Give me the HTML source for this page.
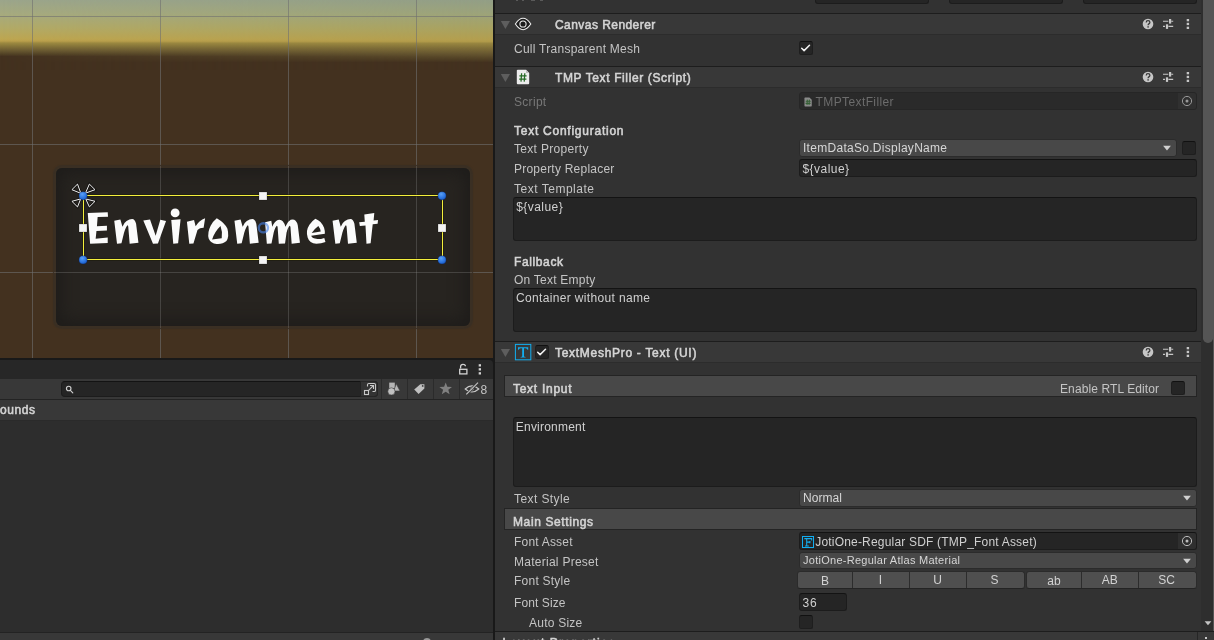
<!DOCTYPE html>
<html><head><meta charset="utf-8"><title>Unity Inspector</title>
<style>
*{box-sizing:border-box;margin:0;padding:0}
html,body{width:1214px;height:640px;overflow:hidden;background:#323232;font-family:"Liberation Sans",sans-serif;font-size:12px}
#root{position:relative;width:1214px;height:640px;overflow:hidden;background:#323232}
.a{position:absolute}
.t{position:absolute;white-space:nowrap;line-height:14px;font-size:12px;color:#c4c4c4}
.t.b{font-weight:normal;-webkit-text-stroke:0.55px #d4d4d4;color:#d4d4d4}
.t.c{text-align:center}
.hl{position:absolute;left:495px;width:706px;height:1px;background:#1d1d1d}
.hd{position:absolute;left:495px;width:706px;height:21px;background:#383838;border-bottom:1px solid #2c2c2c}
.tf{position:absolute;background:#252525;border:1px solid #1c1c1c;border-top-color:#131313;border-radius:3px}
.dd{position:absolute;background:#484848;border:1px solid #2b2b2b;border-radius:3px}
.cb{position:absolute;width:14px;height:14px;background:#252525;border:1px solid #1e1e1e;border-top-color:#111;border-radius:2.5px}
.bar{position:absolute;left:504px;width:693px;height:22px;background:#484848;border:1px solid #242424}
svg{position:absolute;overflow:visible}
</style></head><body><div id="root">

<!-- ================= SCENE VIEW ================= -->
<div class="a" id="scene" style="left:0;top:0;width:493px;height:358px;overflow:hidden;background:#43311f">
  <div class="a" style="left:0;top:0;width:493px;height:70px;background:linear-gradient(to bottom,#9ba58b 0px,#a6aa7f 14px,#b2aa67 28px,#bda651 39px,#bba04c 41px,#9c8940 43px,#806f38 47px,#665630 51px,#534326 54px,#43311f 56.5px,#43311f 100%)"></div>
  <div class="a" style="left:0;top:0;width:493px;height:70px;-webkit-mask-image:linear-gradient(to right,transparent 0%,#000 100%);mask-image:linear-gradient(to right,transparent 0%,#000 100%);background:linear-gradient(to bottom,#929e86 0px,#9ca379 14px,#a8a261 28px,#b39e4e 40px,#b09a4a 41.5px,#978540 43.5px,#806f38 48px,#665630 54px,#514125 59px,#43311f 62.5px,#43311f 100%)"></div>
  <!-- grid -->
  <div class="a" style="left:32px;top:0;width:1px;height:358px;background:rgba(112,112,112,.6)"></div>
  <div class="a" style="left:160px;top:0;width:1px;height:358px;background:rgba(112,112,112,.6)"></div>
  <div class="a" style="left:288px;top:0;width:1px;height:358px;background:rgba(112,112,112,.6)"></div>
  <div class="a" style="left:416px;top:0;width:1px;height:358px;background:rgba(112,112,112,.6)"></div>
  <div class="a" style="left:0;top:16px;width:493px;height:1px;background:rgba(112,112,112,.6)"></div>
  <div class="a" style="left:0;top:144px;width:493px;height:1px;background:rgba(112,112,112,.6)"></div>
  <div class="a" style="left:0;top:272px;width:493px;height:1px;background:rgba(112,112,112,.6)"></div>
  <!-- panel -->
  <div class="a" style="left:56px;top:168px;width:414px;height:158px;border-radius:6px;background:#272420;box-shadow:inset 0 0 16px 5px #1e1c1a,0 0 1px 2.5px #3a2f23"></div>
  <!-- grid over panel (faint) -->
  <div class="a" style="left:160px;top:166px;width:1px;height:162px;background:rgba(150,150,150,.28)"></div>
  <div class="a" style="left:288px;top:166px;width:1px;height:162px;background:rgba(150,150,150,.28)"></div>
  <div class="a" style="left:416px;top:166px;width:1px;height:162px;background:rgba(150,150,150,.28)"></div>
  <div class="a" style="left:54px;top:272px;width:418px;height:1px;background:rgba(150,150,150,.28)"></div>
  <!-- scene text -->
  <svg style="left:0;top:0" width="493" height="358" viewBox="0 0 493 358">
 <defs>
  <path id="gn" d="M306,170 L368,156 L389,229 Q405,190 431,173 Q460,152 487,151 Q515,152 527,200 L551,392 L462,401 L448,232 Q446,212 440,214 Q425,225 405,290 L379,396 L334,403 Z"/>
 </defs>
 <g fill="#fbfbfb" fill-rule="evenodd">
  <g transform="translate(84,204) scale(0.098843)">
   <path d="M38,92 L240,84 L243,128 L138,132 L131,226 L232,221 L232,268 L126,273 L118,352 L240,340 L240,395 L62,402 Z"/>
   <use href="#gn"/>
   <path d="M600,168 L668,158 L725,320 L772,160 L830,172 L748,400 L698,402 Z"/>
   <circle cx="922" cy="90" r="45"/>
   <path d="M883,162 L977,155 L952,398 L903,402 Z"/>
  </g>
  <g transform="translate(180,204) scale(0.098843)">
   <path d="M70,179 L142,161 L158,225 Q195,165 254,145 L239,241 Q200,240 177,264 L136,399 L94,403 Z"/>
   <path d="M372,145 Q450,190 480,250 Q500,330 470,375 Q430,410 370,405 Q310,400 290,350 Q275,290 310,220 Q335,175 372,145 Z M410,223 Q350,280 325,359 L422,347 Q432,280 410,223 Z"/>
   <use href="#gn" transform="translate(245,0)"/>
  </g>
  <g transform="translate(262,204) scale(0.098843)">
   <path d="M31,184 L94,170 L104,229 Q125,180 160,163 Q190,152 210,175 Q228,195 236,229 Q255,180 290,160 Q320,148 340,170 Q358,190 362,215 L384,392 L300,401 L288,235 Q286,218 280,220 Q262,235 248,290 L233,399 L170,401 L158,235 Q156,218 150,220 Q132,235 118,290 L96,399 L49,403 Z"/>
   <path d="M540,148 Q600,170 628,240 Q640,280 636,302 L498,322 Q505,350 560,355 Q600,355 630,343 L642,385 Q600,402 550,402 Q480,400 462,340 Q440,270 480,210 Q505,170 540,148 Z M570,222 Q530,250 503,294 L594,279 Q592,250 570,222 Z"/>
   <use href="#gn" transform="translate(408,0)"/>
   <path d="M1035,107 L1136,90 L1129,168 L1174,163 L1170,200 L1120,206 L1099,396 L1057,401 L1047,218 L990,223 L983,185 L1040,179 Z"/>
  </g>
 </g>
</svg>

  <!-- gizmos -->
  <svg style="left:0;top:0" width="493" height="358" viewBox="0 0 493 358">
    <defs>
      <radialGradient id="bd" cx="0.4" cy="0.3" r="0.8"><stop offset="0" stop-color="#5aa0f5"/><stop offset="0.6" stop-color="#2b74e0"/><stop offset="1" stop-color="#1550b8"/></radialGradient>
    </defs>
    <rect x="83.5" y="195.5" width="359" height="64" fill="none" stroke="rgba(0,0,0,.45)" stroke-width="3"/>
    <rect x="83.5" y="195.5" width="359" height="64" fill="none" stroke="#f4ef3d" stroke-width="1.1"/>
    <!-- anchor flower -->
    <g fill="none" stroke="rgba(0,0,0,.5)" stroke-width="2.4" stroke-linejoin="miter">
      <path d="M80.9 193.4 L71.9 189.7 L77.5 184.1 Z"/><path d="M85.4 193.2 L89.4 184.1 L95 189.7 Z"/>
      <path d="M80.7 198.9 L71.9 201.3 L77.5 206.9 Z"/><path d="M85.7 198.9 L95 201.3 L89.4 206.9 Z"/>
    </g>
    <g fill="none" stroke="#f2f2f2" stroke-width="1" stroke-linejoin="miter">
      <path d="M80.9 193.4 L71.9 189.7 L77.5 184.1 Z"/><path d="M85.4 193.2 L89.4 184.1 L95 189.7 Z"/>
      <path d="M80.7 198.9 L71.9 201.3 L77.5 206.9 Z"/><path d="M85.7 198.9 L95 201.3 L89.4 206.9 Z"/>
    </g>
    <!-- pivot ring -->
    <circle cx="263.4" cy="227.8" r="4.6" fill="none" stroke="rgba(70,130,235,.6)" stroke-width="2.4"/>
    <!-- white handles -->
    <g fill="#f4f4f4" stroke="rgba(0,0,0,.35)" stroke-width="0.6">
      <rect x="259" y="192" width="8" height="8"/><rect x="259" y="256" width="8" height="8"/>
      <rect x="79" y="224" width="8" height="8"/><rect x="438" y="224" width="8" height="8"/>
    </g>
    <!-- blue dots -->
    <g stroke="rgba(10,30,80,.6)" stroke-width="0.6" fill="url(#bd)">
      <circle cx="83.1" cy="195.8" r="4.1"/><circle cx="442" cy="195.8" r="4.1"/>
      <circle cx="83.1" cy="259.9" r="4.1"/><circle cx="442" cy="259.9" r="4.1"/>
    </g>
  </svg>
</div>

<!-- ================= LEFT BOTTOM (project) ================= -->
<div class="a" style="left:0;top:358px;width:495px;height:282px;background:#191919"></div>
<div class="a" style="left:0;top:360px;width:493px;height:19px;background:#272727;border-top-right-radius:4px"></div>
<div class="a" style="left:0;top:379px;width:493px;height:20px;background:#383838"></div>
<div class="a" style="left:0;top:399px;width:493px;height:1px;background:#232323"></div>
<div class="a" style="left:0;top:400px;width:493px;height:20px;background:#383838"></div>
<div class="a" style="left:0;top:420px;width:493px;height:1px;background:#2a2a2a"></div>
<div class="a" style="left:0;top:421px;width:493px;height:211px;background:#2d2d2d"></div>
<div class="a" style="left:0;top:632px;width:493px;height:1px;background:#232323"></div>
<div class="a" style="left:0;top:633px;width:493px;height:7px;background:#383838"></div>
<div class="a" style="left:423px;top:638px;width:8px;height:8px;border-radius:50%;background:#9a9a9a"></div>
<!-- search field -->
<div class="a" style="left:61px;top:381px;width:317px;height:16px;background:#252525;border:1px solid #1c1c1c;border-top-color:#131313;border-radius:4px"></div>
<div class="a" style="left:360px;top:381px;width:18px;height:16px;background:#333333;border:1px solid #262626;border-left-color:#222;border-radius:0 4px 4px 0"></div>
<!-- toolbar separators -->
<div class="a" style="left:381px;top:379px;width:1px;height:20px;background:#2b2b2b"></div>
<div class="a" style="left:407px;top:379px;width:1px;height:20px;background:#2b2b2b"></div>
<div class="a" style="left:433px;top:379px;width:1px;height:20px;background:#2b2b2b"></div>
<div class="a" style="left:459px;top:379px;width:1px;height:20px;background:#2b2b2b"></div>
<svg style="left:0;top:358px" width="493" height="45" viewBox="0 358 493 45">
  <!-- magnifier -->
  <circle cx="68.7" cy="388.5" r="2.25" fill="none" stroke="#cfcfcf" stroke-width="1.15"/>
  <path d="M70.4 390.3 L72.8 392.8" stroke="#cfcfcf" stroke-width="1.15" stroke-linecap="round"/>
  <!-- popout icon -->
  <path d="M367.5 386.5 V384.8 Q367.5 383.5 368.8 383.5 H374.2 Q375.5 383.5 375.5 384.8 V390.2 Q375.5 391.5 374.2 391.5 H372.5" fill="none" stroke="#c8c8c8" stroke-width="1.1"/>
  <rect x="364.5" y="390.5" width="4" height="4" fill="none" stroke="#c8c8c8" stroke-width="1.1"/>
  <path d="M368.6 390.4 L373.3 385.7 M370 385.5 H373.5 V389" fill="none" stroke="#c8c8c8" stroke-width="1.1"/>
  <!-- shapes icon -->
  <rect x="389.2" y="382.6" width="5.6" height="5.4" fill="#b4b4b4"/>
  <path d="M396.3 383.8 L400 391 L393.6 391 Z" fill="#b4b4b4" stroke="#3a3a3a" stroke-width="0.6"/>
  <circle cx="391.4" cy="391.4" r="3.6" fill="#c0c0c0" stroke="#3a3a3a" stroke-width="0.6"/>
  <!-- tag icon -->
  <path d="M414.2 389.6 L420.3 384.2 L424.4 384.2 L424.4 388.4 L418.6 393.9 Z" fill="#c0c0c0"/>
  <circle cx="422.7" cy="385.9" r="0.9" fill="#3a3a3a"/>
  <!-- star -->
  <path d="M445.7 382.4 L447.3 386.8 L452 386.9 L448.3 389.8 L449.6 394.3 L445.7 391.7 L441.8 394.3 L443.1 389.8 L439.4 386.9 L444.1 386.8 Z" fill="#808080"/>
  <!-- eye slash -->
  <path d="M465.2 389 Q471.8 382.6 478.8 389 Q471.8 395 465.2 389 Z" fill="none" stroke="#c8c8c8" stroke-width="1.1"/>
  <circle cx="472" cy="388.8" r="1.7" fill="#c8c8c8"/>
  <path d="M466.3 394.4 L478 382.6" stroke="#3a3a3a" stroke-width="2.6"/>
  <path d="M466.3 394.4 L478 382.6" stroke="#c8c8c8" stroke-width="1.1"/>
  <!-- lock -->
  <rect x="459.7" y="369.3" width="7.2" height="4.6" fill="none" stroke="#d4d4d4" stroke-width="1.3"/>
  <path d="M460.6 368.6 V366.6 Q460.6 364.3 463 364.3 Q465.4 364.3 465.4 366.2" fill="none" stroke="#d4d4d4" stroke-width="1.3"/>
  <!-- kebab -->
  <rect x="478.7" y="364.2" width="2.3" height="2.3" fill="#d4d4d4"/><rect x="478.7" y="368.2" width="2.3" height="2.3" fill="#d4d4d4"/><rect x="478.7" y="372.2" width="2.3" height="2.3" fill="#d4d4d4"/>
</svg>

<!-- ================= INSPECTOR ================= -->
<div class="a" style="left:495px;top:0;width:706px;height:640px;background:#323232"></div>
<!-- scrollbar -->
<div class="a" style="left:1201px;top:0;width:13px;height:640px;background:#2e2e2e"></div>
<div class="a" style="left:1212.7px;top:0;width:1.3px;height:632px;background:#555555"></div>
<div class="a" style="left:1203px;top:-8px;width:9.6px;height:351px;background:#555555;border-radius:4.8px"></div>
<svg style="left:1204px;top:620px" width="8" height="6" viewBox="0 0 8 6"><path d="M0.6 1.2 H7.4 L4 5.2 Z" fill="#c4c4c4"/></svg>

<!-- top partial fields -->
<div class="tf" style="left:815px;top:-14px;width:114px;height:18px"></div>
<div class="tf" style="left:949px;top:-14px;width:114px;height:18px"></div>
<div class="tf" style="left:1083px;top:-14px;width:114px;height:18px"></div>
<div class="a" style="left:516px;top:0;width:2px;height:1px;background:#5a5a5a"></div>
<div class="a" style="left:522px;top:0;width:2px;height:1px;background:#5a5a5a"></div>
<div class="a" style="left:531px;top:0;width:4px;height:1px;background:#5a5a5a"></div>
<div class="a" style="left:540px;top:0;width:3px;height:1px;background:#5a5a5a"></div>

<!-- Canvas Renderer header -->
<div class="hl" style="top:13px"></div>
<div class="hd" style="top:14px"></div>
<!-- TMP Text Filler header -->
<div class="hl" style="top:66px"></div>
<div class="hd" style="top:67px"></div>
<!-- TextMeshPro header -->
<div class="hl" style="top:341px"></div>
<div class="hd" style="top:342px"></div>
<!-- bottom preview header -->
<div class="hl" style="top:631px;width:719px"></div>
<div class="a" style="left:495px;top:632px;width:719px;height:8px;background:#383838"></div>
<div class="a" style="left:1197px;top:632px;width:1px;height:8px;background:#262626"></div>
<div class="a" style="left:1205px;top:636.5px;width:2.3px;height:2.3px;background:#c8c8c8"></div>

<!-- header icons -->
<svg style="left:495px;top:0" width="719" height="640" viewBox="495 0 719 640">
  <defs>
    <g id="fold"><path d="M500.8 0 H510 L505.4 8 Z" fill="#5e5e5e"/></g>
    <g id="hdr">
      <circle cx="1148" cy="0" r="5.3" fill="#c6c6c6"/>
      <path d="M1146.2 -1.6 Q1146.2 -3.3 1148 -3.3 Q1149.9 -3.3 1149.9 -1.7 Q1149.9 -0.7 1148.9 -0.1 Q1148.1 0.4 1148.1 1.2" fill="none" stroke="#383838" stroke-width="1.25"/>
      <rect x="1147.4" y="2.2" width="1.4" height="1.4" fill="#383838"/>
      <!-- sliders -->
      <path d="M1163 -2.8 H1168.3 M1171.2 -2.8 H1173.2 M1163 2.4 H1165 M1168.4 2.4 H1173.2" stroke="#c6c6c6" stroke-width="1.1" fill="none"/>
      <rect x="1169" y="-5" width="2.2" height="4.6" fill="#c6c6c6"/>
      <rect x="1165.9" y="0.3" width="2.2" height="4.6" fill="#c6c6c6"/>
      <!-- kebab -->
      <rect x="1186.7" y="-5" width="2.4" height="2.3" fill="#c6c6c6"/><rect x="1186.7" y="-1.2" width="2.4" height="2.3" fill="#c6c6c6"/><rect x="1186.7" y="2.7" width="2.4" height="2.3" fill="#c6c6c6"/>
    </g>
    <g id="chk"><path d="M2.7 7.2 L5.1 9.6 L10.5 4.3" fill="none" stroke="#f2f2f2" stroke-width="1.5" stroke-linecap="round" stroke-linejoin="round"/></g>
    <g id="tgt"><circle cx="0" cy="0" r="4.6" fill="none" stroke="#bdbdbd" stroke-width="1"/><circle cx="0" cy="0" r="1.5" fill="#bdbdbd"/></g>
    <g id="dar"><path d="M-3.9 -2.2 H3.9 L0 2.4 Z" fill="#d0d0d0"/></g>
  </defs>
  <use href="#fold" y="21"/><use href="#fold" y="74"/><use href="#fold" y="349"/>
  <use href="#hdr" y="24"/><use href="#hdr" y="77"/><use href="#hdr" y="352"/>
  <!-- eye icon -->
  <path d="M515.4 24 Q523 12.6 530.8 24 Q523 35.4 515.4 24 Z" fill="#1c1c1c" stroke="#ececec" stroke-width="1.1"/>
  <circle cx="523" cy="24" r="3.1" fill="#1c1c1c" stroke="#ececec" stroke-width="1.05"/>
  <!-- script icon -->
  <path d="M517.8 69.8 H526 L529.2 73 V83.2 Q529.2 84.2 528.2 84.2 H517.8 Q516.8 84.2 516.8 83.2 V70.8 Q516.8 69.8 517.8 69.8 Z" fill="#ececec"/>
  <path d="M526 69.8 L529.2 73 H526 Z" fill="#bdbdbd"/>
  <path d="M521.6 73.2 L521 81.6 M524.8 73.2 L524.2 81.6 M519.4 75.8 H526.6 M519.2 79 H526.4" stroke="#256a25" stroke-width="1.25" fill="none"/>
  <!-- TMP icon -->
  <rect x="515.4" y="344.4" width="15.4" height="15.4" fill="none" stroke="#12aef0" stroke-width="1"/>
  <path d="M518 347.2 H528.2 V349.8 H527.5 Q527.2 348.2 525.6 348.2 H524 V356.2 Q524 356.9 525.6 356.9 V357.6 H520.6 V356.9 Q522.2 356.9 522.2 356.2 V348.2 H520.6 Q519 348.2 518.7 349.8 H518 Z" fill="#12aef0"/>
</svg>

<!-- checkbox (Cull) -->
<div class="cb" style="left:799px;top:41px"></div>
<svg style="left:799px;top:41px" width="14" height="14"><use href="#chk"/></svg>
<!-- checkbox TMP enabled -->
<div class="cb" style="left:535px;top:345px"></div>
<svg style="left:535px;top:345px" width="14" height="14"><use href="#chk"/></svg>

<!-- Script object field -->
<div class="tf" style="left:799px;top:92px;width:398px;height:18px;background:#2a2a2a;border-color:#262626"></div>
<div class="a" style="left:1178px;top:93px;width:18px;height:16px;background:#303030;border-radius:0 2px 2px 0"></div>
<svg style="left:1187px;top:101px" width="1" height="1"><use href="#tgt" opacity="0.75"/></svg>
<svg style="left:803.8px;top:97.2px" width="8.4" height="9.8" viewBox="0 0 10 12.6">
  <path d="M1 0.6 H6.6 L9.6 3.4 V11.4 Q9.6 12.2 8.8 12.2 H1 Q0.2 12.2 0.2 11.4 V1.4 Q0.2 0.6 1 0.6 Z" fill="#8a8a8a"/>
  <path d="M3.9 3.4 L3.5 10.2 M6.5 3.4 L6.1 10.2 M1.8 5.5 H8.2 M1.6 8.2 H8" stroke="#355f35" stroke-width="1.3" fill="none"/>
</svg>

<!-- Text Property dropdown -->
<div class="dd" style="left:799px;top:139px;width:378px;height:18px"></div>
<svg style="left:1167px;top:148px" width="1" height="1"><use href="#dar"/></svg>
<div class="cb" style="left:1182px;top:141px;background:#252525"></div>
<!-- Property replacer -->
<div class="tf" style="left:799px;top:159px;width:398px;height:18px"></div>
<!-- Text template area -->
<div class="tf" style="left:513px;top:197px;width:684px;height:44px"></div>
<!-- On text empty area -->
<div class="tf" style="left:513px;top:288px;width:684px;height:44px"></div>

<!-- Text Input bar -->
<div class="bar" style="top:375px"></div>
<div class="cb" style="left:1171px;top:381px"></div>
<!-- Text input area -->
<div class="tf" style="left:513px;top:417px;width:684px;height:70px"></div>
<!-- Text style dropdown -->
<div class="dd" style="left:799px;top:489px;width:398px;height:18px"></div>
<svg style="left:1187px;top:498px" width="1" height="1"><use href="#dar"/></svg>
<!-- Main Settings bar -->
<div class="bar" style="top:508px"></div>
<!-- Font asset field -->
<div class="tf" style="left:799px;top:532px;width:398px;height:18px"></div>
<div class="a" style="left:1178px;top:533px;width:18px;height:16px;background:#2f2f2f;border-radius:0 2px 2px 0"></div>
<svg style="left:1187px;top:541px" width="1" height="1"><use href="#tgt"/></svg>
<svg style="left:802px;top:536px" width="12" height="12" viewBox="0 0 12 12">
  <rect x="0.5" y="0.5" width="11" height="11" fill="none" stroke="#12aef0" stroke-width="1"/>
  <path d="M2.3 2.6 H9.7 V4.6 M4.7 2.6 V9.9 M3 9.9 H6.8 M4.7 6.1 H7.9 M7.9 4.9 V7.3" fill="none" stroke="#12aef0" stroke-width="1.05"/>
</svg>
<!-- Material preset dropdown -->
<div class="dd" style="left:799px;top:552px;width:398px;height:17px"></div>
<svg style="left:1187px;top:561px" width="1" height="1"><use href="#dar"/></svg>
<!-- Font style buttons -->
<div class="a" style="left:797px;top:571px;width:228px;height:18px;background:#4f4f4f;border-radius:3px;border:1px solid #2b2b2b;border-bottom-color:#242424"></div>
<div class="a" style="left:852px;top:572px;width:1px;height:16px;background:#2c2c2c"></div>
<div class="a" style="left:909px;top:572px;width:1px;height:16px;background:#2c2c2c"></div>
<div class="a" style="left:966px;top:572px;width:1px;height:16px;background:#2c2c2c"></div>
<div class="a" style="left:1026px;top:571px;width:171px;height:18px;background:#4f4f4f;border-radius:3px;border:1px solid #2b2b2b;border-bottom-color:#242424"></div>
<div class="a" style="left:1081px;top:572px;width:1px;height:16px;background:#2c2c2c"></div>
<div class="a" style="left:1138px;top:572px;width:1px;height:16px;background:#2c2c2c"></div>
<!-- Font size -->
<div class="tf" style="left:799px;top:593px;width:48px;height:18px"></div>
<!-- Auto size -->
<div class="cb" style="left:799px;top:615px"></div>

<!-- separator between panes -->
<div class="a" style="left:493px;top:0;width:2px;height:640px;background:#191919"></div>

<div id="tx" style="position:absolute;left:0;top:0;width:1214px;height:640px;will-change:transform">
<span class="t r" style="left:514.00px;top:41.84px;letter-spacing:0.263px;">Cull Transparent Mesh</span>
<span class="t r" style="left:514.00px;top:94.84px;letter-spacing:0.303px;color:#787878">Script</span>
<span class="t r" style="left:514.00px;top:141.84px;letter-spacing:0.308px;">Text Property</span>
<span class="t r" style="left:514.00px;top:161.84px;letter-spacing:0.224px;">Property Replacer</span>
<span class="t r" style="left:514.00px;top:181.84px;letter-spacing:0.514px;">Text Template</span>
<span class="t r" style="left:514.00px;top:272.84px;letter-spacing:0.226px;">On Text Empty</span>
<span class="t r" style="left:514.00px;top:491.84px;letter-spacing:0.419px;">Text Style</span>
<span class="t r" style="left:514.00px;top:534.84px;letter-spacing:0.200px;">Font Asset</span>
<span class="t r" style="left:514.00px;top:554.84px;letter-spacing:0.264px;">Material Preset</span>
<span class="t r" style="left:514.00px;top:573.84px;letter-spacing:0.241px;">Font Style</span>
<span class="t r" style="left:514.00px;top:595.84px;letter-spacing:0.100px;">Font Size</span>
<span class="t r" style="left:529.00px;top:615.84px;letter-spacing:0.228px;">Auto Size</span>
<span class="t b" style="left:555.00px;top:17.84px;letter-spacing:0.446px;">Canvas Renderer</span>
<span class="t b" style="left:555.00px;top:70.84px;letter-spacing:0.618px;">TMP Text Filler (Script)</span>
<span class="t b" style="left:555.00px;top:345.84px;letter-spacing:0.709px;">TextMeshPro - Text (UI)</span>
<span class="t b" style="left:514.00px;top:123.84px;letter-spacing:0.751px;">Text Configuration</span>
<span class="t b" style="left:514.00px;top:254.84px;letter-spacing:0.616px;">Fallback</span>
<span class="t b" style="left:513.00px;top:381.84px;letter-spacing:0.719px;">Text Input</span>
<span class="t b" style="left:513.00px;top:514.84px;letter-spacing:0.608px;">Main Settings</span>
<span class="t b" style="left:0.00px;top:402.84px;letter-spacing:0.574px;">ounds</span>
<span class="t b" style="left:502.60px;top:635.84px;letter-spacing:1.121px;">Layout Properties</span>
<span class="t r" style="left:815.60px;top:94.84px;letter-spacing:0.388px;color:#6c6c6c">TMPTextFiller</span>
<span class="t r" style="left:803.00px;top:140.84px;letter-spacing:0.283px;color:#d6d6d6">ItemDataSo.DisplayName</span>
<span class="t r" style="left:802.40px;top:161.84px;letter-spacing:0.473px;color:#d0d0d0">${value}</span>
<span class="t r" style="left:516.20px;top:199.84px;letter-spacing:0.444px;color:#d0d0d0">${value}</span>
<span class="t r" style="left:516.00px;top:290.84px;letter-spacing:0.345px;color:#d0d0d0">Container without name</span>
<span class="t r" style="left:515.80px;top:419.84px;letter-spacing:0.212px;color:#d0d0d0">Environment</span>
<span class="t r" style="left:803.00px;top:490.84px;letter-spacing:0.066px;color:#d6d6d6">Normal</span>
<span class="t r" style="left:815.20px;top:534.84px;letter-spacing:0.193px;color:#d0d0d0">JotiOne-Regular SDF (TMP_Font Asset)</span>
<span class="t r" style="left:803.00px;top:553.19px;letter-spacing:0.269px;color:#d6d6d6;font-size:11px">JotiOne-Regular Atlas Material</span>
<span class="t r" style="left:802.60px;top:595.84px;letter-spacing:0.641px;color:#d0d0d0">36</span>
<span class="t r" style="left:1060.00px;top:381.84px;letter-spacing:0.101px;">Enable RTL Editor</span>
<span class="t r" style="left:480.40px;top:383.04px;color:#c4c4c4">8</span>
<span class="t r c" style="left:825.00px;top:573.84px;width:40px;margin-left:-20px;color:#d2d2d2">B</span>
<span class="t r c" style="left:880.50px;top:572.84px;width:40px;margin-left:-20px;color:#d2d2d2">I</span>
<span class="t r c" style="left:937.50px;top:572.84px;width:40px;margin-left:-20px;color:#d2d2d2">U</span>
<span class="t r c" style="left:994.50px;top:572.84px;width:40px;margin-left:-20px;color:#d2d2d2">S</span>
<span class="t r c" style="left:1054.00px;top:573.84px;width:40px;margin-left:-20px;color:#d2d2d2">ab</span>
<span class="t r c" style="left:1109.75px;top:572.84px;width:40px;margin-left:-20px;color:#d2d2d2">AB</span>
<span class="t r c" style="left:1166.50px;top:572.84px;width:40px;margin-left:-20px;color:#d2d2d2">SC</span>
</div>
</div></body></html>
